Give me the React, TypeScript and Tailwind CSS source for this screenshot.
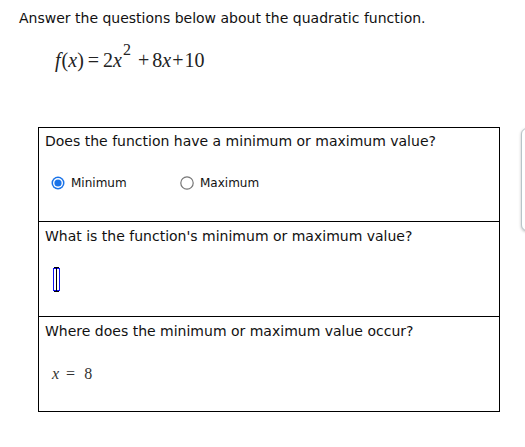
import React from "react";

function Radio({ checked }: { checked: boolean }) {
  return checked ? (
    <svg width="14" height="14" viewBox="0 0 14 14" className="shrink-0">
      <circle cx="7" cy="7" r="6.5" fill="#1a73e8" />
      <circle cx="7" cy="7" r="5" fill="#ffffff" />
      <circle cx="7" cy="7" r="3.6" fill="#1a73e8" />
    </svg>
  ) : (
    <svg width="14" height="14" viewBox="0 0 14 14" className="shrink-0">
      <circle cx="7" cy="7" r="6.2" fill="#ffffff" stroke="#767676" strokeWidth="1.2" />
    </svg>
  );
}

export default function App() {
  return (
    <div
      className="w-[525px] h-[447px] overflow-hidden bg-white text-[14px] leading-[16px] text-[#111]"
      style={{ fontFamily: '"DejaVu Sans", Verdana, sans-serif' }}
    >
      <p className="pl-[19px] pt-[10px]">Answer the questions below about the quadratic function.</p>

      <div
        className="pl-[55px] mt-[17px] h-[28px] flex items-end text-[20px] leading-[22px] text-[#222]"
        style={{ fontFamily: '"Liberation Serif", "Times New Roman", serif' }}
      >
        <span className="italic">f</span>
        <span className="ml-[1px]">(</span>
        <span className="italic">x</span>
        <span>)</span>
        <span className="mx-[4px]">=</span>
        <span>2</span>
        <span className="italic">x</span>
        <span className="relative -top-[10px] text-[16px] ml-[1px]">2</span>
        <span className="ml-[7px] mr-[3px]">+</span>
        <span>8</span>
        <span className="italic">x</span>
        <span className="mx-[1px]">+</span>
        <span>10</span>
      </div>

      <div className="flex mt-[56px]">
        <div className="ml-[38px] w-[462px] border border-black shrink-0">
          <div className="h-[94px] pl-[6px] pt-[5px] border-b border-black">
            <p>Does the function have a minimum or maximum value?</p>
            <div className="flex items-center mt-[26px] pl-[6px]">
              <div className="flex items-center gap-[6px] w-[129px]">
                <Radio checked />
                <span className="text-[12px]">Minimum</span>
              </div>
              <div className="flex items-center gap-[6px]">
                <Radio checked={false} />
                <span className="text-[12px]">Maximum</span>
              </div>
            </div>
          </div>

          <div className="h-[95px] pl-[6px] pt-[6px] border-b border-black">
            <p>What is the function's minimum or maximum value?</p>
            <div className="mt-[24px] ml-[8px] relative w-[7px] h-[23px] border border-[#1010ee]">
              <svg width="9" height="27" viewBox="0 0 9 27" className="absolute -left-[2px] -top-[3px]">
                <line x1="4.5" y1="2" x2="4.5" y2="25" stroke="#000" strokeWidth="1" />
                <line x1="2" y1="1.5" x2="7" y2="1.5" stroke="#000" strokeWidth="1" />
                <line x1="2" y1="25.5" x2="7" y2="25.5" stroke="#000" strokeWidth="1" />
              </svg>
            </div>
          </div>

          <div className="h-[94px] pl-[6px] pt-[6px]">
            <p>Where does the minimum or maximum value occur?</p>
            <div
              className="mt-[27px] pl-[7px] text-[16px] text-[#333] flex gap-[7px]"
              style={{ fontFamily: '"Liberation Serif", "Times New Roman", serif' }}
            >
              <span className="italic">x</span>
              <span>=</span>
              <span className="ml-[2px]">8</span>
            </div>
          </div>
        </div>

        <div className="ml-[21px] mt-[1px] w-[40px] h-[103px] shrink-0 rounded-[6px] border border-[#b8c4c8] shadow-[0_1px_3px_rgba(0,0,0,0.25)] bg-white" />
      </div>
    </div>
  );
}
